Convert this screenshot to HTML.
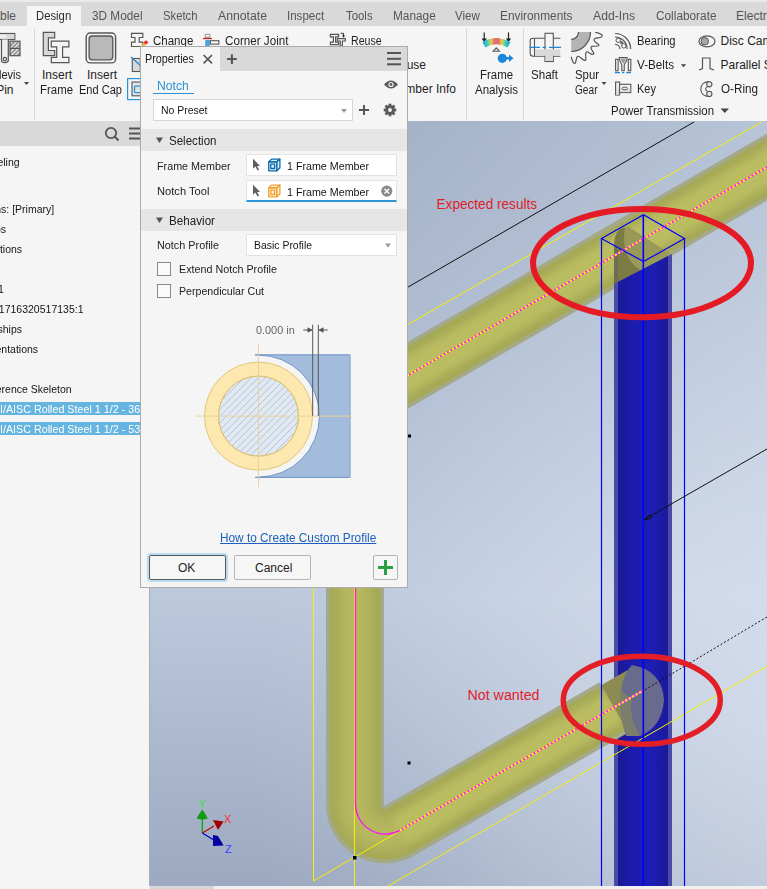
<!DOCTYPE html><html><head><meta charset="utf-8"><style>
html,body{margin:0;padding:0}
body{width:767px;height:889px;overflow:hidden;position:relative;background:#f5f5f5;font-family:"Liberation Sans",sans-serif}
.t{position:absolute;line-height:1;white-space:nowrap}
.r{position:absolute}
svg{display:block}
</style></head><body>
<div class="r" style="left:0px;top:0px;width:767px;height:26px;background:#d9d9d9;"></div>
<div class="r" style="left:0px;top:0px;width:767px;height:2px;background:#e9e9e9;"></div>
<div class="r" style="left:27px;top:6px;width:54px;height:20px;background:#f5f5f5;"></div>
<div class="t" style="right:751.00px;top:10.00px;font-size:12px;color:#555;">Table</div>
<div class="t" style="left:36.00px;top:10.00px;font-size:12px;color:#2b2b2b;transform:scaleX(0.9423);transform-origin:left top;">Design</div>
<div class="t" style="left:92.10px;top:10.00px;font-size:12px;color:#555;transform:scaleX(0.9833);transform-origin:left top;">3D Model</div>
<div class="t" style="left:163.30px;top:10.00px;font-size:12px;color:#555;transform:scaleX(0.9377);transform-origin:left top;">Sketch</div>
<div class="t" style="left:218.30px;top:10.00px;font-size:12px;color:#555;transform:scaleX(1.0199);transform-origin:left top;">Annotate</div>
<div class="t" style="left:287.40px;top:10.00px;font-size:12px;color:#555;transform:scaleX(0.9615);transform-origin:left top;">Inspect</div>
<div class="t" style="left:345.50px;top:10.00px;font-size:12px;color:#555;transform:scaleX(0.9495);transform-origin:left top;">Tools</div>
<div class="t" style="left:392.50px;top:10.00px;font-size:12px;color:#555;transform:scaleX(0.9846);transform-origin:left top;">Manage</div>
<div class="t" style="left:455.30px;top:10.00px;font-size:12px;color:#555;transform:scaleX(0.9576);transform-origin:left top;">View</div>
<div class="t" style="left:500.40px;top:10.00px;font-size:12px;color:#555;transform:scaleX(0.9882);transform-origin:left top;">Environments</div>
<div class="t" style="left:593.40px;top:10.00px;font-size:12px;color:#555;transform:scaleX(1.0156);transform-origin:left top;">Add-Ins</div>
<div class="t" style="left:655.60px;top:10.00px;font-size:12px;color:#555;transform:scaleX(0.9858);transform-origin:left top;">Collaborate</div>
<div class="t" style="left:736.10px;top:10.00px;font-size:12px;color:#555;">Electronics</div>
<div class="r" style="left:0px;top:26px;width:767px;height:95px;background:#f5f5f5;"></div>
<div class="r" style="left:34px;top:28px;width:1px;height:92px;background:#dadada;"></div>
<div class="r" style="left:466px;top:28px;width:1px;height:92px;background:#dadada;"></div>
<div class="r" style="left:523px;top:28px;width:1px;height:92px;background:#dadada;"></div>
<div class="t" style="right:746.00px;top:69.00px;font-size:12px;color:#1f1f1f;transform:scaleX(0.9164);transform-origin:right top;">levis</div>
<div class="t" style="right:753.50px;top:84.00px;font-size:12px;color:#1f1f1f;">Pin</div>
<div class="t" style="left:42.00px;top:69.00px;font-size:12px;color:#1f1f1f;">Insert</div>
<div class="t" style="left:40.00px;top:84.00px;font-size:12px;color:#1f1f1f;transform:scaleX(0.9518);transform-origin:left top;">Frame</div>
<div class="t" style="left:87.00px;top:69.00px;font-size:12px;color:#1f1f1f;">Insert</div>
<div class="t" style="left:79.00px;top:84.00px;font-size:12px;color:#1f1f1f;transform:scaleX(0.9208);transform-origin:left top;">End Cap</div>
<div class="t" style="left:152.50px;top:35.00px;font-size:12px;color:#1f1f1f;transform:scaleX(0.9587);transform-origin:left top;">Change</div>
<div class="t" style="left:224.50px;top:35.00px;font-size:12px;color:#1f1f1f;transform:scaleX(0.9715);transform-origin:left top;">Corner Joint</div>
<div class="t" style="left:351.30px;top:35.00px;font-size:12px;color:#1f1f1f;transform:scaleX(0.8850);transform-origin:left top;">Reuse</div>
<div class="t" style="right:341.00px;top:59.00px;font-size:12px;color:#1f1f1f;">Reuse</div>
<div class="t" style="right:311.00px;top:83.00px;font-size:12px;color:#1f1f1f;">Member Info</div>
<div class="t" style="left:480.00px;top:69.00px;font-size:12px;color:#1f1f1f;transform:scaleX(0.9518);transform-origin:left top;">Frame</div>
<div class="t" style="left:475.00px;top:84.00px;font-size:12px;color:#1f1f1f;transform:scaleX(0.9623);transform-origin:left top;">Analysis</div>
<div class="t" style="left:531.00px;top:69.00px;font-size:12px;color:#1f1f1f;transform:scaleX(0.9636);transform-origin:left top;">Shaft</div>
<div class="t" style="left:575.00px;top:69.00px;font-size:12px;color:#1f1f1f;transform:scaleX(0.9468);transform-origin:left top;">Spur</div>
<div class="t" style="left:575.00px;top:84.00px;font-size:12px;color:#1f1f1f;transform:scaleX(0.8434);transform-origin:left top;">Gear</div>
<div class="t" style="left:636.50px;top:35.00px;font-size:12px;color:#1f1f1f;transform:scaleX(0.9332);transform-origin:left top;">Bearing</div>
<div class="t" style="left:636.50px;top:59.00px;font-size:12px;color:#1f1f1f;transform:scaleX(0.9732);transform-origin:left top;">V-Belts</div>
<div class="t" style="left:636.50px;top:83.00px;font-size:12px;color:#1f1f1f;transform:scaleX(0.9188);transform-origin:left top;">Key</div>
<div class="t" style="left:720.50px;top:35.00px;font-size:12px;color:#1f1f1f;">Disc Cam</div>
<div class="t" style="left:720.50px;top:59.00px;font-size:12px;color:#1f1f1f;">Parallel S</div>
<div class="t" style="left:720.50px;top:83.00px;font-size:12px;color:#1f1f1f;transform:scaleX(0.9734);transform-origin:left top;">O-Ring</div>
<div class="t" style="left:611.30px;top:105.00px;font-size:12px;color:#1f1f1f;transform:scaleX(0.9534);transform-origin:left top;">Power Transmission</div>
<svg class="r" style="left:0;top:26px" width="767" height="95" viewBox="0 26 767 95">
<defs><pattern id="hp" width="3" height="3" patternUnits="userSpaceOnUse" patternTransform="rotate(45)"><rect width="3" height="3" fill="#e8e8e8"/><rect width="1.3" height="3" fill="#777"/></pattern></defs>
<g stroke="#555" stroke-width="1.2" fill="none">
<!-- clevis pin -->
<rect x="-3" y="33.5" width="17.8" height="6" fill="#efefef"/>
<rect x="6.3" y="34" width="8" height="5" fill="#d8d8d8" stroke="none"/>
<path d="M1.5,39.5 L1.5,60.5 Q1.5,62.7 4.9,62.7 Q8.3,62.7 8.3,60.5 L8.3,39.5" fill="#efefef"/>
<circle cx="4.9" cy="59.1" r="1.7"/>
<rect x="10" y="41.2" width="10" height="14.5" fill="url(#hp)"/>
<line x1="10" y1="48.4" x2="20" y2="48.4"/>
<!-- insert frame -->
<path d="M43.3,32.3 L54.7,32.3 L54.7,37.8 L48.4,37.8 L48.4,50.5 L54.7,50.5 L54.7,55.7 L43.3,55.7 Z" fill="#d9d9d9"/>
<path d="M51.3,41.2 L68.9,41.2 L68.9,46.8 L62.6,46.8 L62.6,57.3 L68.9,57.3 L68.9,62.7 L51.3,62.7 L51.3,57.3 L56.7,57.3 L56.7,46.8 L51.3,46.8 Z" fill="#f3f3f3"/>
<!-- end cap -->
<rect x="86.2" y="33" width="29.4" height="29.9" rx="4" fill="#f5f5f5" stroke-width="1.4"/>
<rect x="89.1" y="36" width="23.7" height="23.8" rx="3" fill="#b9b9b9" stroke-width="1.3"/>
<!-- change -->
<path d="M131.5,33.3 L142.8,33.3 L142.8,37.5 L139.2,37.5 L139.2,42.2 L142.8,42.2 L142.8,46.5 L131.5,46.5 L131.5,42.2 L135,42.2 L135,37.5 L131.5,37.5 Z" fill="#f5f5f5"/>
</g>
<path d="M140,46.5 L144.5,42 L146.5,44 L142,48.5 Z" fill="#f2b040"/><circle cx="146" cy="42.3" r="1.9" fill="#e83030"/>
<!-- trim -->
<rect x="132.3" y="58.5" width="8" height="13" fill="#dadada" stroke="#555" stroke-width="1.1"/>
<line x1="131" y1="57" x2="141" y2="66" stroke="#1e88d8" stroke-width="1.3"/>
<!-- selected button -->
<rect x="127.6" y="78.6" width="20" height="21" fill="#f3f7fb" stroke="#2a94d6" stroke-width="1.2"/>
<rect x="132" y="82" width="10" height="13.8" fill="#e4e4e4" stroke="#555" stroke-width="1.1"/>
<path d="M141,86.2 L135.5,86.2 Q134.5,86.2 134.5,87.2 L134.5,91.6 Q134.5,92.6 135.5,92.6 L141,92.6" fill="none" stroke="#2a94d6" stroke-width="1.3"/>
<!-- corner joint -->
<rect x="205.3" y="34.3" width="4.5" height="3" fill="none" stroke="#999" stroke-width="1"/>
<line x1="203" y1="38.5" x2="212" y2="38.5" stroke="#d82020" stroke-width="1.3"/>
<rect x="205.2" y="40" width="4.6" height="6" fill="#4ba3e0"/>
<rect x="210.3" y="40.7" width="8.5" height="3.4" fill="#fff" stroke="#555" stroke-width="1.1"/>
<!-- reuse -->
<g stroke="#555" stroke-width="1.2" fill="#f5f5f5">
<path d="M330.4,34.3 L338.6,34.3 L338.6,36.8 L335.6,36.8 L335.6,42.2 L338.6,42.2 L338.6,44.6 L330.4,44.6 L330.4,42.2 L333.4,42.2 L333.4,36.8 L330.4,36.8 Z"/>
<path d="M337.3,38.6 L345.3,38.6 L345.3,41 L342.4,41 L342.4,46 L340.2,46 L340.2,41 L337.3,41 Z"/>
</g>
<path d="M340.5,33.3 L343.5,33.3 L343.5,36.5" stroke="#333" stroke-width="1" fill="none"/><path d="M341.8,35.5 L345.2,35.5 L343.5,37.8Z" fill="#333"/>
<!-- dropdown arrows -->
<path d="M24,82 L29,82 L26.5,85Z" fill="#444"/>
<path d="M601.5,82 L606.5,82 L604,85Z" fill="#444"/>
<path d="M680.8,64.2 L686.2,64.2 L683.5,67.2Z" fill="#444"/>
<path d="M720.5,108.5 L729,108.5 L724.75,113Z" fill="#444"/>
<!-- frame analysis -->
<g stroke="#222" stroke-width="1.2"><line x1="484.2" y1="32.4" x2="484.2" y2="40"/><line x1="508.5" y1="32.4" x2="508.5" y2="40"/></g>
<path d="M481.5,38.5 L487,38.5 L484.2,42Z M505.8,38.5 L511.2,38.5 L508.5,42Z" fill="#222"/>
<defs><linearGradient id="rb" x1="482" x2="511" y1="0" y2="0" gradientUnits="userSpaceOnUse">
<stop offset="0" stop-color="#2d8ee0"/><stop offset="0.18" stop-color="#30d0c0"/><stop offset="0.32" stop-color="#f0d040"/><stop offset="0.42" stop-color="#e07070"/><stop offset="0.58" stop-color="#e07070"/><stop offset="0.68" stop-color="#f0d040"/><stop offset="0.82" stop-color="#30d0c0"/><stop offset="1" stop-color="#2d8ee0"/></linearGradient></defs>
<path d="M484,44.8 Q496.3,37.5 509,44.8" stroke="url(#rb)" stroke-width="6" fill="none"/>
<path d="M496.3,47.8 L499.4,51.3 L493.2,51.3Z" fill="none" stroke="#555" stroke-width="1.1"/>
<circle cx="502.3" cy="58.3" r="4.6" fill="#1e86d8"/>
<path d="M505,57 L509,57 L509,54.6 L513.5,58.3 L509,62 L509,59.6 L505,59.6Z" fill="#1e86d8"/>
<!-- shaft -->
<g stroke="#555" stroke-width="1.1" fill="none">
<path d="M560.4,38.3 L533,38.3 Q530.2,38.3 530.2,41 L530.2,53.5 Q530.2,56.2 533,56.2 L560.4,56.2"/>
<line x1="534.5" y1="38.3" x2="534.5" y2="56.2"/>
<rect x="545" y="33.3" width="8.3" height="28.2" fill="#f5f5f5"/>
</g>
<rect x="535" y="49.5" width="25.4" height="6.2" fill="#dadada"/><rect x="545.5" y="49.5" width="7.3" height="11.5" fill="#dadada"/>
<path d="M529.5,47.4 L540,47.4 M542.5,47.4 L546,47.4 M549,47.4 L561,47.4" stroke="#1e86d8" stroke-width="1.2"/>
<!-- spur gear -->
<path d="M571.2,32.1 L590.5,32.1 A19.4,19.4 0 0 1 571.2,51.5 L571.2,39.4 A7.3,7.3 0 0 0 578.5,32.1 Z" fill="#b4b4b4"/>
<path d="M590.5,32.1 A19.4,19.4 0 0 1 571.2,51.5 M578.5,32.1 A7.3,7.3 0 0 1 571.2,39.4" fill="none" stroke="#555" stroke-width="1.2"/>
<path d="M595.2,32.4 C600,33 604,35 601.5,37 C599,38.5 594,37 594,40 C594,42.5 600.5,44.5 598.5,45.8 C596,47 590.5,45 591,48 C591.5,51 596,54 592.5,54.3 C589.5,54.5 587.5,50 586,52.5 C584.5,55 587.5,61 584.5,60.3 C581.5,59.6 579.5,55 577.5,56.5 C575.5,58 576.5,64 574.3,63.3 C572.3,62.6 572,59 571.3,56.8" fill="none" stroke="#555" stroke-width="1.2"/>
<!-- bearing -->
<g stroke="#555" stroke-width="1.2" fill="none">
<path d="M615.1,33.5 A15.5,15.5 0 0 1 630.6,49"/>
<path d="M615.1,37 A12,12 0 0 1 627.1,49"/>
<path d="M615.1,44.3 A4.7,4.7 0 0 1 619.8,49"/>
</g>
<g fill="#f5f5f5" stroke="#555" stroke-width="1"><circle cx="618.2" cy="40.3" r="2.2"/><circle cx="623.8" cy="45.9" r="2.2"/></g>
<circle cx="621.6" cy="42.6" r="1.6" fill="#666"/>
<!-- vbelts -->
<g stroke="#555" stroke-width="1.1" fill="#f5f5f5">
<rect x="615.6" y="59.3" width="2.5" height="11.5"/>
<rect x="628.3" y="59.3" width="2.5" height="11.5"/>
<path d="M619.3,57.5 L627,57.5 L627,59.5 L624.2,64.8 L624.2,70.8 L621.8,70.8 L621.8,64.8 L619.3,59.5 Z"/>
</g>
<path d="M620.2,58.4 L626.2,58.4 L623.2,64Z" fill="#9a9a9a"/>
<path d="M615,72.6 L620,72.6 M622,72.6 L624.3,72.6 M626.2,72.6 L631,72.6" stroke="#1e86d8" stroke-width="1.3"/>
<!-- key -->
<rect x="615.6" y="82" width="4" height="13" fill="#ececec" stroke="#555" stroke-width="1.1"/>
<rect x="616" y="89" width="3.2" height="5.6" fill="#d8d8d8"/>
<rect x="619.6" y="84.3" width="11.2" height="8.3" fill="#f5f5f5" stroke="#555" stroke-width="1.1"/>
<rect x="620.2" y="88.6" width="10" height="3.5" fill="#dcdcdc"/>
<ellipse cx="624.8" cy="88.4" rx="2.8" ry="1.3" fill="#f5f5f5" stroke="#555" stroke-width="1"/>
<!-- disc cam -->
<ellipse cx="707" cy="41.3" rx="8" ry="5.5" fill="none" stroke="#555" stroke-width="1.2"/>
<circle cx="704.8" cy="41.3" r="3.7" fill="#a8a8a8" stroke="#555" stroke-width="1"/>
<!-- parallel splines -->
<path d="M699,70 L702.5,68.5 L702.5,58 L710,58 L710,68.5 L714,70" fill="none" stroke="#555" stroke-width="1.2"/>
<!-- o-ring -->
<g stroke="#555" stroke-width="1.1" fill="none">
<path d="M709.3,81.6 C703.5,81.6 700.8,85 700.8,89 C700.8,93 703.5,96.6 709.3,96.6"/>
<path d="M707.3,86.6 C706,87.5 705.6,88.2 705.6,89.1 C705.6,90 706,90.7 707.3,91.6"/>
<circle cx="709.3" cy="84.3" r="2.6" fill="#e8e8e8"/><circle cx="709.3" cy="93.9" r="2.6" fill="#e8e8e8"/>
</g>
</svg>

<div class="r" style="left:0px;top:121px;width:140px;height:25px;background:#d9d9d9;"></div>
<svg class="r" style="left:0;top:121px" width="140" height="25"><circle cx="111" cy="12" r="5.2" fill="none" stroke="#555" stroke-width="1.8"/><line x1="114.8" y1="15.8" x2="118.5" y2="19.5" stroke="#555" stroke-width="2"/><rect x="129" y="6.5" width="12" height="2" fill="#555"/><rect x="129" y="11.5" width="12" height="2" fill="#555"/><rect x="129" y="16.5" width="12" height="2" fill="#555"/></svg>
<div class="t" style="right:747.00px;top:156.50px;font-size:11px;color:#151515;transform:scaleX(0.9550);transform-origin:right top;">Modeling</div>
<div class="t" style="right:712.30px;top:203.50px;font-size:11px;color:#151515;transform:scaleX(0.9550);transform-origin:right top;">Representations: [Primary]</div>
<div class="t" style="right:760.50px;top:223.50px;font-size:11px;color:#151515;transform:scaleX(0.9550);transform-origin:right top;">Groups</div>
<div class="t" style="right:744.70px;top:243.50px;font-size:11px;color:#151515;transform:scaleX(0.9550);transform-origin:right top;">Annotations</div>
<div class="t" style="right:763.50px;top:283.50px;font-size:11px;color:#151515;transform:scaleX(0.9550);transform-origin:right top;">Assembly1</div>
<div class="t" style="right:683.40px;top:303.50px;font-size:11px;color:#151515;transform:scaleX(0.9550);transform-origin:right top;">Skeleton1716320517135:1</div>
<div class="t" style="right:745.00px;top:323.50px;font-size:11px;color:#151515;transform:scaleX(0.9550);transform-origin:right top;">Relationships</div>
<div class="t" style="right:729.00px;top:343.50px;font-size:11px;color:#151515;transform:scaleX(0.9550);transform-origin:right top;">Representations</div>
<div class="t" style="right:695.00px;top:383.50px;font-size:11px;color:#151515;transform:scaleX(0.9550);transform-origin:right top;">Reference Skeleton</div>
<div class="r" style="left:0px;top:402px;width:140px;height:13px;background:#66b5e0;"></div>
<div class="r" style="left:0px;top:422px;width:140px;height:13px;background:#66b5e0;"></div>
<div class="r" style="left:0;top:400px;width:140px;height:40px;overflow:hidden">
<div class="t" style="left:-0.50px;top:3.50px;font-size:11px;color:#fff;transform:scaleX(0.9750);transform-origin:left top;">I/AISC Rolled Steel 1 1/2 - 36</div>
<div class="t" style="left:-0.50px;top:23.50px;font-size:11px;color:#fff;transform:scaleX(0.9750);transform-origin:left top;">I/AISC Rolled Steel 1 1/2 - 53</div>
</div>
<svg class="r" style="left:149px;top:121px" width="618" height="765" viewBox="149 121 618 765">
<defs>
<linearGradient id="bgv" gradientUnits="userSpaceOnUse" x1="0" y1="121" x2="0" y2="886">
<stop offset="0" stop-color="#a3b1c7"/><stop offset="0.62" stop-color="#bcc8dc"/><stop offset="1" stop-color="#9ca9c0"/>
</linearGradient>
<linearGradient id="bgh" gradientUnits="userSpaceOnUse" x1="380" y1="0" x2="767" y2="0">
<stop offset="0" stop-color="#e6eefa" stop-opacity="0"/><stop offset="1" stop-color="#e6eefa" stop-opacity="0.3"/>
</linearGradient>
<radialGradient id="bgr" gradientUnits="userSpaceOnUse" cx="767" cy="720" r="520">
<stop offset="0" stop-color="#e6eefa" stop-opacity="0.42"/><stop offset="1" stop-color="#e6eefa" stop-opacity="0"/>
</radialGradient>
<filter id="soft" x="-10%" y="-10%" width="120%" height="120%"><feGaussianBlur stdDeviation="3"/></filter>
<linearGradient id="colg" gradientUnits="userSpaceOnUse" x1="618" y1="0" x2="668" y2="0"><stop offset="0" stop-color="#1a1a96"/><stop offset="0.25" stop-color="#1b1bac"/><stop offset="0.65" stop-color="#1d1db6"/><stop offset="1" stop-color="#1a1a9a"/></linearGradient>
</defs>
<rect x="149" y="121" width="618" height="765" fill="url(#bgv)"/><rect x="149" y="121" width="618" height="765" fill="url(#bgh)"/><rect x="149" y="121" width="618" height="765" fill="url(#bgr)"/>
<rect x="149" y="121" width="1" height="765" fill="#a9adb5"/>
<!-- black line upper -->
<line x1="150" y1="436" x2="694" y2="122" stroke="#111" stroke-width="1"/>
<!-- yellow lines -->
<line x1="150" y1="472" x2="761.7" y2="122" stroke="#f4f000" stroke-width="1"/>
<line x1="313.5" y1="500" x2="313.5" y2="881" stroke="#f4f000" stroke-width="1"/>
<!-- column body -->
<g id="col">
<rect x="614" y="240" width="58" height="646" fill="#4a4aa8"/>
<rect x="618" y="240" width="50" height="646" fill="url(#colg)"/>
</g>
<!-- pipe -->
<g fill="none" stroke-linejoin="round">
<path d="M800,147.9 L377.4,393 A45,45 0 0 0 355,431.9 L355,804.4 A30,30 0 0 0 400,830.4 L614,707.4" stroke="#a4a987" stroke-width="58"/>
<path d="M800,147.9 L377.4,393 A45,45 0 0 0 355,431.9 L355,804.4 A30,30 0 0 0 400,830.4 L614,707.4" stroke="#a5a855" stroke-width="50"/>
<path d="M800,147.9 L377.4,393 A45,45 0 0 0 355,431.9 L355,804.4 A30,30 0 0 0 400,830.4 L614,707.4" stroke="#afb15b" stroke-width="38" filter="url(#soft)"/>
<path d="M800,147.9 L377.4,393 A45,45 0 0 0 355,431.9 L355,804.4 A30,30 0 0 0 400,830.4 L614,707.4" stroke="#b6b85f" stroke-width="20" filter="url(#soft)"/>
</g>
<path d="M800,147.9 L377.4,393 M400,830.4 L614,707.4" stroke="#bcbe62" stroke-width="30" fill="none" filter="url(#soft)" opacity="0.85"/>
<!-- lower pipe inside column -->
<path d="M614,707.4 L640,692.4" stroke="#8c8c52" stroke-width="51" fill="none"/>
<path d="M632,665 Q662,670 664,700 Q662,727 640,736 L626,736 Q618,712 621,690 Q624,672 632,665 Z" fill="#686b8c"/>
<path d="M621,690 Q618,712 626,736 L640,736 Q628,715 632,700 Z" fill="#8a8a58" opacity="0.6"/>
<!-- notch region at upper crossing -->
<path d="M614,284 L614,249 Q614,228 625,227.5 L629,227 L670.5,254 L672,254 Z" fill="#9a9a58"/>
<path d="M614,284 L614,249 Q614,228 625,227.5 Q620,258 641,270.5 Z" fill="#7b7b45"/>
<rect x="614" y="249" width="4" height="35" fill="#5f5f62" opacity="0.5"/>
<!-- column below upper pipe (front) -->
<clipPath id="below"><path d="M600,284 L614,284 L672,254 L700,254 L700,890 L600,890 Z"/></clipPath>
<g clip-path="url(#below)">
<rect x="614" y="240" width="58" height="100" fill="#4a4aa8"/>
<rect x="618" y="240" width="50" height="100" fill="url(#colg)"/>
</g>
<line x1="380" y1="890.7" x2="767" y2="666.2" stroke="#f4f000" stroke-width="1"/>
<!-- pink center lines -->
<line x1="354.5" y1="500" x2="354.5" y2="886" stroke="#f4f000" stroke-width="1"/>
<line x1="313.5" y1="881" x2="643" y2="690" stroke="#f4f000" stroke-width="1"/>

<path d="M800,147.9 L377.4,393" stroke="#ff20ff" stroke-width="2" fill="none"/>
<path d="M800,147.9 L377.4,393" stroke="#ffff00" stroke-width="2" stroke-dasharray="2 2" fill="none"/>
<path d="M355.5,500 L355.5,804.4 A30,30 0 0 0 400,830.4" stroke="#ff10ff" stroke-width="1.3" fill="none"/>
<path d="M400,830.4 L643,690.7" stroke="#ff20ff" stroke-width="2" fill="none"/>
<path d="M400,830.4 L643,690.7" stroke="#ffff00" stroke-width="2" stroke-dasharray="2 2" fill="none"/>
<!-- blue thin box -->
<g stroke="#0000ff" stroke-width="1.2" fill="none">
<path d="M601.5,238.5 L643.5,214.8 L684.5,238.5 L643.5,261.6 Z"/>
<line x1="601.5" y1="238.5" x2="601.5" y2="886"/>
<line x1="684.5" y1="238.5" x2="684.5" y2="886"/>
<line x1="643.3" y1="214.8" x2="643.3" y2="886" stroke-width="1.6"/>
</g>
<!-- black line right with arrow, dotted -->
<line x1="767" y1="449" x2="646" y2="518.5" stroke="#111" stroke-width="1"/>
<path d="M644,520 L650,514.5 L652,518 Z" fill="none" stroke="#111" stroke-width="1"/>
<line x1="767" y1="617" x2="643" y2="691" stroke="#111" stroke-width="1" stroke-dasharray="2 2"/>
<!-- black squares -->
<rect x="408" y="434.5" width="3" height="3" fill="#000"/>
<rect x="407.5" y="761.5" width="3" height="3" fill="#000"/>
<rect x="353" y="856" width="3.5" height="3.5" fill="#000"/>
<!-- red ellipses -->
<ellipse cx="642" cy="263.1" rx="109" ry="54.2" fill="none" stroke="#e41a24" stroke-width="6"/>
<ellipse cx="641.75" cy="700.25" rx="78.5" ry="43.9" fill="none" stroke="#e41e26" stroke-width="5.5"/>
<text x="436.5" y="208.7" font-family="Liberation Sans" font-size="14" fill="#e0202a" textLength="100.6" lengthAdjust="spacingAndGlyphs">Expected results</text>
<text x="467.5" y="700" font-family="Liberation Sans" font-size="14" fill="#e0202a" textLength="72" lengthAdjust="spacingAndGlyphs">Not wanted</text>
<!-- triad -->
<g>
<line x1="202.3" y1="833" x2="202.3" y2="818" stroke="#10a010" stroke-width="1.3"/>
<path d="M202.3,809.5 Q205,813 207.8,818.5 Q202.3,820.5 196.8,818.5 Q199.5,813 202.3,809.5Z" fill="#109a10"/>
<line x1="202.3" y1="833" x2="214" y2="826" stroke="#c00000" stroke-width="1.2"/>
<path d="M213,820 L223.6,821.5 L218,830 Z" fill="#a00000"/>
<line x1="202.3" y1="833" x2="213" y2="839.5" stroke="#0000c0" stroke-width="1.2"/>
<path d="M213,835 L218,836 L223.6,845.5 L213,846 Z" fill="#0000a0"/>
<text x="198.5" y="807.7" font-family="Liberation Sans" font-size="11" fill="#40e040">Y</text>
<text x="224" y="822.7" font-family="Liberation Sans" font-size="11" fill="#ff3030">X</text>
<text x="225" y="852.6" font-family="Liberation Sans" font-size="11" fill="#3040ff">Z</text>
</g>
</svg>
<div class="r" style="left:149px;top:886px;width:618px;height:3px;background:#f0f0f0"></div>
<div class="r" style="left:150px;top:886px;width:64px;height:3px;background:#d6d6d6"></div>

<div class="r" style="left:140px;top:46px;width:268px;height:542px;background:#f5f5f5;box-sizing:border-box;border:1px solid #ababab;"></div>
<div class="r" style="left:220px;top:47px;width:187px;height:24px;background:#d9d9d9;"></div>
<div class="t" style="left:144.60px;top:53.00px;font-size:12px;color:#222;transform:scaleX(0.8941);transform-origin:left top;">Properties</div>
<svg class="r" style="left:141px;top:47px" width="266" height="24"><path d="M62.6,8 L71,16.4 M71,8 L62.6,16.4" stroke="#555" stroke-width="1.6"/><path d="M90.9,7.3 L90.9,16.9 M86.1,12.1 L95.7,12.1" stroke="#555" stroke-width="2"/><rect x="246" y="5" width="14" height="2" fill="#555"/><rect x="246" y="10.8" width="14" height="2" fill="#555"/><rect x="246" y="16.3" width="14" height="2" fill="#555"/></svg>
<div class="t" style="left:156.70px;top:79.75px;font-size:12.5px;color:#2a94d6;transform:scaleX(0.9738);transform-origin:left top;">Notch</div>
<div class="r" style="left:153px;top:92.5px;width:41px;height:1.5px;background:#2a94d6;"></div>
<svg class="r" style="left:380px;top:76px" width="22" height="18"><path d="M4,8.5 Q11,0.5 18,8.5 Q11,16.5 4,8.5Z" fill="#5a5a5a"/><circle cx="11" cy="8.5" r="2.6" fill="#f5f5f5"/><circle cx="11" cy="8.5" r="1.4" fill="#5a5a5a"/></svg>
<div class="r" style="left:153px;top:99px;width:200px;height:22px;background:#fff;box-sizing:border-box;border:1px solid #d6d6d6;"></div>
<div class="t" style="left:161.40px;top:104.50px;font-size:11px;color:#151515;transform:scaleX(0.9507);transform-origin:left top;">No Preset</div>
<svg class="r" style="left:338px;top:106px" width="12" height="10"><path d="M3,3 L9,3 L6,7Z" fill="#9a9a9a"/></svg>
<svg class="r" style="left:355px;top:101px" width="45" height="18"><path d="M9,4 L9,14 M4,9 L14,9" stroke="#555" stroke-width="2"/><g transform="translate(35,9)" fill="#5a5a5a"><circle r="4.8"/><rect x="-1.4" y="-6.3" width="2.8" height="3" transform="rotate(0)"/><rect x="-1.4" y="-6.3" width="2.8" height="3" transform="rotate(45)"/><rect x="-1.4" y="-6.3" width="2.8" height="3" transform="rotate(90)"/><rect x="-1.4" y="-6.3" width="2.8" height="3" transform="rotate(135)"/><rect x="-1.4" y="-6.3" width="2.8" height="3" transform="rotate(180)"/><rect x="-1.4" y="-6.3" width="2.8" height="3" transform="rotate(225)"/><rect x="-1.4" y="-6.3" width="2.8" height="3" transform="rotate(270)"/><rect x="-1.4" y="-6.3" width="2.8" height="3" transform="rotate(315)"/><circle r="1.9" fill="#f5f5f5"/></g></svg>
<div class="r" style="left:141px;top:129px;width:266px;height:22px;background:#e6e6e6;"></div>
<svg class="r" style="left:154px;top:135px" width="12" height="10"><path d="M2,2.5 L9,2.5 L5.5,8Z" fill="#555"/></svg>
<div class="t" style="left:168.90px;top:135.00px;font-size:12px;color:#222;transform:scaleX(0.9622);transform-origin:left top;">Selection</div>
<div class="t" style="left:156.90px;top:160.50px;font-size:11px;color:#222;transform:scaleX(0.9790);transform-origin:left top;">Frame Member</div>
<div class="t" style="left:157.00px;top:185.50px;font-size:11px;color:#222;transform:scaleX(1.0121);transform-origin:left top;">Notch Tool</div>
<div class="r" style="left:246px;top:154px;width:151px;height:22px;background:#fff;box-sizing:border-box;border:1px solid #e3e3e3;"></div>
<div class="r" style="left:246px;top:180px;width:151px;height:22px;background:#fff;box-sizing:border-box;border:1px solid #e3e3e3;border-bottom:2px solid #2a94d6;"></div>
<div class="t" style="left:286.50px;top:160.50px;font-size:11px;color:#151515;transform:scaleX(0.9721);transform-origin:left top;">1 Frame Member</div>
<div class="t" style="left:286.50px;top:186.50px;font-size:11px;color:#151515;transform:scaleX(0.9721);transform-origin:left top;">1 Frame Member</div>
<svg class="r" style="left:252px;top:158px" width="10" height="14"><path d="M1,0.8 L1,10.8 L3.4,8.5 L5.5,12.6 L7.1,11.8 L5.1,7.9 L8.1,7.9 Z" fill="#606060"/></svg>
<svg class="r" style="left:266px;top:157px" width="16" height="16"><g fill="#dcedf8" stroke="#0a6ea8" stroke-width="1.3" stroke-linejoin="round"><path d="M2.7,5 L5.5,2.1 L13.9,2.1 L10.7,5 Z"/><path d="M13.9,2.1 L13.9,11 L10.7,13.8 L10.7,5 Z"/><rect x="2.7" y="5" width="8" height="8.8"/><rect x="4.8" y="7.2" width="3.8" height="4.3"/></g></svg>
<svg class="r" style="left:252px;top:184px" width="10" height="14"><path d="M1,0.8 L1,10.8 L3.4,8.5 L5.5,12.6 L7.1,11.8 L5.1,7.9 L8.1,7.9 Z" fill="#606060"/></svg>
<svg class="r" style="left:266px;top:183px" width="16" height="16"><g fill="#fff2dc" stroke="#f0a030" stroke-width="1.3" stroke-linejoin="round"><path d="M2.7,5 L5.5,2.1 L13.9,2.1 L10.7,5 Z"/><path d="M13.9,2.1 L13.9,11 L10.7,13.8 L10.7,5 Z"/><rect x="2.7" y="5" width="8" height="8.8"/><rect x="4.8" y="7.2" width="3.8" height="4.3"/></g></svg>
<svg class="r" style="left:380px;top:185px" width="14" height="13"><circle cx="6.8" cy="6.1" r="5.6" fill="#8a8a8a"/><path d="M4.5,3.8 L9.1,8.4 M9.1,3.8 L4.5,8.4" stroke="#fff" stroke-width="1.4"/></svg>
<div class="r" style="left:141px;top:209px;width:266px;height:22px;background:#e6e6e6;"></div>
<svg class="r" style="left:154px;top:215px" width="12" height="10"><path d="M2,2.5 L9,2.5 L5.5,8Z" fill="#555"/></svg>
<div class="t" style="left:169.00px;top:215.00px;font-size:12px;color:#222;transform:scaleX(0.9712);transform-origin:left top;">Behavior</div>
<div class="t" style="left:157.00px;top:239.50px;font-size:11px;color:#222;transform:scaleX(0.9846);transform-origin:left top;">Notch Profile</div>
<div class="r" style="left:246px;top:234px;width:151px;height:22px;background:#fff;box-sizing:border-box;border:1px solid #e3e3e3;"></div>
<div class="t" style="left:254.40px;top:239.50px;font-size:11px;color:#151515;transform:scaleX(0.9487);transform-origin:left top;">Basic Profile</div>
<svg class="r" style="left:382px;top:241px" width="12" height="10"><path d="M3,2.5 L9,2.5 L6,6.5Z" fill="#9a9a9a"/></svg>
<div class="r" style="left:157px;top:262px;width:14px;height:14px;background:#fafafa;box-sizing:border-box;border:1px solid #8a8a8a;"></div>
<div class="r" style="left:157px;top:284px;width:14px;height:14px;background:#fafafa;box-sizing:border-box;border:1px solid #8a8a8a;"></div>
<div class="t" style="left:179.40px;top:263.50px;font-size:11px;color:#222;transform:scaleX(0.9763);transform-origin:left top;">Extend Notch Profile</div>
<div class="t" style="left:179.40px;top:285.50px;font-size:11px;color:#222;transform:scaleX(0.9653);transform-origin:left top;">Perpendicular Cut</div>
<svg class="r" style="left:141px;top:300px" width="266" height="200" viewBox="141 300 266 200"><defs><clipPath id="ic"><circle cx="258.5" cy="416.1" r="40"/></clipPath></defs><path d="M255,354.8 L350,354.8 L350,477.4 L255,477.4 L258.5,477.1 A61,61 0 0 0 258.5,355.1 Z" fill="#a3bcdc" stroke="#6d93c8" stroke-width="1"/><path d="M350,354.8 L350,477.4" stroke="#a3bcdc" stroke-width="1.2"/><circle cx="258.5" cy="416.1" r="54" fill="#fde9b0" stroke="#e2c57a" stroke-width="1"/><circle cx="258.5" cy="416.1" r="40" fill="#e2e8f0" stroke="#e2c57a" stroke-width="1"/><g clip-path="url(#ic)" stroke="#aec2dc" stroke-width="0.9"><line x1="110" y1="470" x2="220" y2="360"/><line x1="117" y1="470" x2="227" y2="360"/><line x1="124" y1="470" x2="234" y2="360"/><line x1="131" y1="470" x2="241" y2="360"/><line x1="138" y1="470" x2="248" y2="360"/><line x1="145" y1="470" x2="255" y2="360"/><line x1="152" y1="470" x2="262" y2="360"/><line x1="159" y1="470" x2="269" y2="360"/><line x1="166" y1="470" x2="276" y2="360"/><line x1="173" y1="470" x2="283" y2="360"/><line x1="180" y1="470" x2="290" y2="360"/><line x1="187" y1="470" x2="297" y2="360"/><line x1="194" y1="470" x2="304" y2="360"/><line x1="201" y1="470" x2="311" y2="360"/><line x1="208" y1="470" x2="318" y2="360"/><line x1="215" y1="470" x2="325" y2="360"/><line x1="222" y1="470" x2="332" y2="360"/><line x1="229" y1="470" x2="339" y2="360"/><line x1="236" y1="470" x2="346" y2="360"/><line x1="243" y1="470" x2="353" y2="360"/><line x1="250" y1="470" x2="360" y2="360"/><line x1="257" y1="470" x2="367" y2="360"/><line x1="264" y1="470" x2="374" y2="360"/><line x1="271" y1="470" x2="381" y2="360"/><line x1="278" y1="470" x2="388" y2="360"/><line x1="285" y1="470" x2="395" y2="360"/><line x1="292" y1="470" x2="402" y2="360"/><line x1="299" y1="470" x2="409" y2="360"/><line x1="306" y1="470" x2="416" y2="360"/><line x1="313" y1="470" x2="423" y2="360"/><line x1="320" y1="470" x2="430" y2="360"/><line x1="327" y1="470" x2="437" y2="360"/></g><circle cx="258.5" cy="416.1" r="40" fill="none" stroke="#dcc27a" stroke-width="1"/><g stroke="#e8d49a" stroke-width="1" fill="none"><path d="M196,416.1 L226,416.1 M229,416.1 L290,416.1 M293,416.1 L353,416.1"/><path d="M258.5,344 L258.5,384 M258.5,387 L258.5,445 M258.5,448 L258.5,487"/></g><g stroke="#555" stroke-width="1" fill="none"><path d="M312.7,324.7 L312.7,416 M318.3,324.7 L318.3,416 M303.2,330 L312,330 M319,330 L327.7,330"/></g><path d="M312.7,330 L307.5,327.3 L307.5,332.7Z M318.3,330 L323.5,327.3 L323.5,332.7Z" fill="#555"/></svg>
<div class="t" style="left:256.30px;top:325.25px;font-size:11.5px;color:#666;transform:scaleX(0.9456);transform-origin:left top;">0.000 in</div>
<div class="t" style="left:220.30px;top:532.00px;font-size:12px;color:#1b5fbf;transform:scaleX(0.9847);transform-origin:left top;text-decoration:underline;">How to Create Custom Profile</div>
<div class="r" style="left:147px;top:553px;width:81px;height:29px;background:transparent;box-sizing:border-box;border:2px solid #b7dcf3;border-radius:4px;"></div>
<div class="r" style="left:149px;top:555px;width:77px;height:25px;background:#f6f6f6;box-sizing:border-box;border:1px solid #5a5a5a;border-radius:2px;"></div>
<div class="t" style="left:178.00px;top:562.00px;font-size:12px;color:#222;">OK</div>
<div class="r" style="left:234px;top:555px;width:77px;height:25px;background:#f6f6f6;box-sizing:border-box;border:1px solid #b4b4b4;border-radius:2px;"></div>
<div class="t" style="left:255.00px;top:562.00px;font-size:12px;color:#222;">Cancel</div>
<div class="r" style="left:373px;top:555px;width:25px;height:25px;background:#f6f6f6;box-sizing:border-box;border:1px solid #b4b4b4;border-radius:2px;"></div>
<svg class="r" style="left:373px;top:555px" width="25" height="25"><path d="M12.5,5 L12.5,20 M5,12.5 L20,12.5" stroke="#2aa040" stroke-width="3"/></svg>
</body></html>
